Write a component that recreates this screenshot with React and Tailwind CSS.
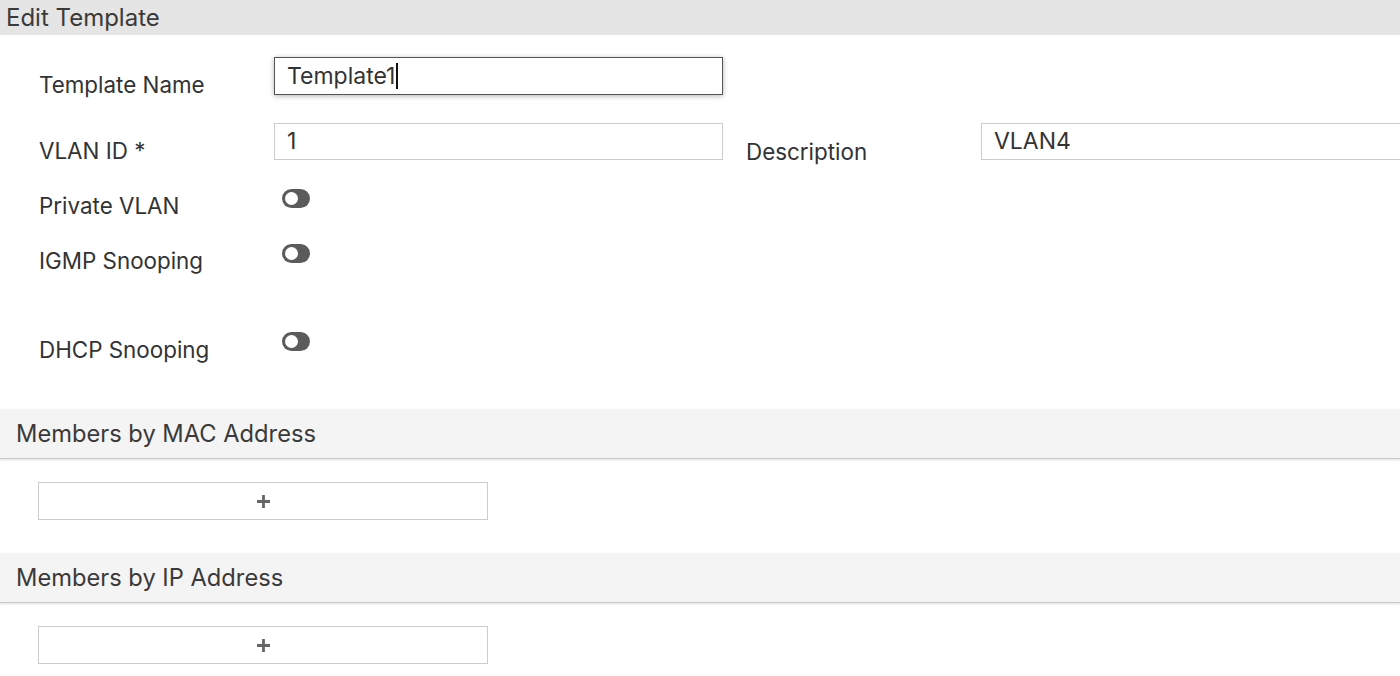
export default function App() {
  return (
    <div className="w-[1400px] h-[676px] overflow-hidden bg-white text-[#333] font-['Inter',sans-serif]">
      <div className="h-[35px] bg-[#e5e5e5] pl-[6px] text-[24px] leading-[35px] text-[#3a3a3a]">
        Edit Template
      </div>

      <div className="pl-[39px] pt-[22px]">
        <div className="flex h-[38px]">
          <div className="w-[235px] shrink-0 pt-[14px] text-[22.4px] leading-[28px]">Template Name</div>
          <div className="w-[449px] shrink-0 h-[38px] border border-[#555] shadow-[0_1px_5px_rgba(0,0,0,0.3)] flex items-center pl-[12px] text-[23px]">
            Template1<span className="inline-block w-[2px] h-[26px] bg-[#111] ml-[1px]"></span>
          </div>
        </div>

        <div className="flex h-[37px] mt-[28px]">
          <div className="w-[235px] shrink-0 pt-[14px] text-[22.4px] leading-[28px]">VLAN ID *</div>
          <div className="w-[449px] shrink-0 h-[37px] border border-[#ccc] flex items-center pl-[12px] text-[23px]">1</div>
          <div className="w-[235px] shrink-0 ml-[23px] pt-[15px] text-[22.4px] leading-[28px]">Description</div>
          <div className="w-[449px] shrink-0 h-[37px] border border-[#ccc] flex items-center pl-[12px] text-[23px]">VLAN4</div>
        </div>

        <div className="flex items-start mt-[29px]">
          <div className="w-[243px] shrink-0 pt-[3px] text-[22.4px] leading-[28px]">Private VLAN</div>
          <Toggle />
        </div>

        <div className="flex items-start mt-[24px]">
          <div className="w-[243px] shrink-0 pt-[3px] text-[22.4px] leading-[28px]">IGMP Snooping</div>
          <Toggle />
        </div>

        <div className="flex items-start mt-[57px]">
          <div className="w-[243px] shrink-0 pt-[4px] text-[22.4px] leading-[28px]">DHCP Snooping</div>
          <Toggle />
        </div>
      </div>

      <Section title="Members by MAC Address" className="mt-[45px]" />
      <Section title="Members by IP Address" className="mt-[33px]" />
    </div>
  )
}

function Toggle() {
  return (
    <div className="w-[28px] h-[19px] shrink-0 rounded-full bg-[#5b5b5b] flex items-center pl-[3px]">
      <div className="w-[13px] h-[13px] rounded-full bg-white"></div>
    </div>
  )
}

function Section({ title, className }) {
  return (
    <div className={className}>
      <div className="h-[50px] bg-[#f4f4f4] border-b border-[#c8c8c8] shadow-[0_1px_2px_rgba(0,0,0,0.12)] pl-[16px] flex items-center text-[23.7px] text-[#3a3a3a]">
        {title}
      </div>
      <div className="pl-[38px] pt-[23px]">
        <div className="w-[450px] h-[38px] border border-[#ccc] flex items-center justify-center">
          <svg width="15" height="15" viewBox="0 0 15 15">
            <path d="M7.5 1v13M1 7.5h13" stroke="#666" strokeWidth="2.8" />
          </svg>
        </div>
      </div>
    </div>
  )
}
